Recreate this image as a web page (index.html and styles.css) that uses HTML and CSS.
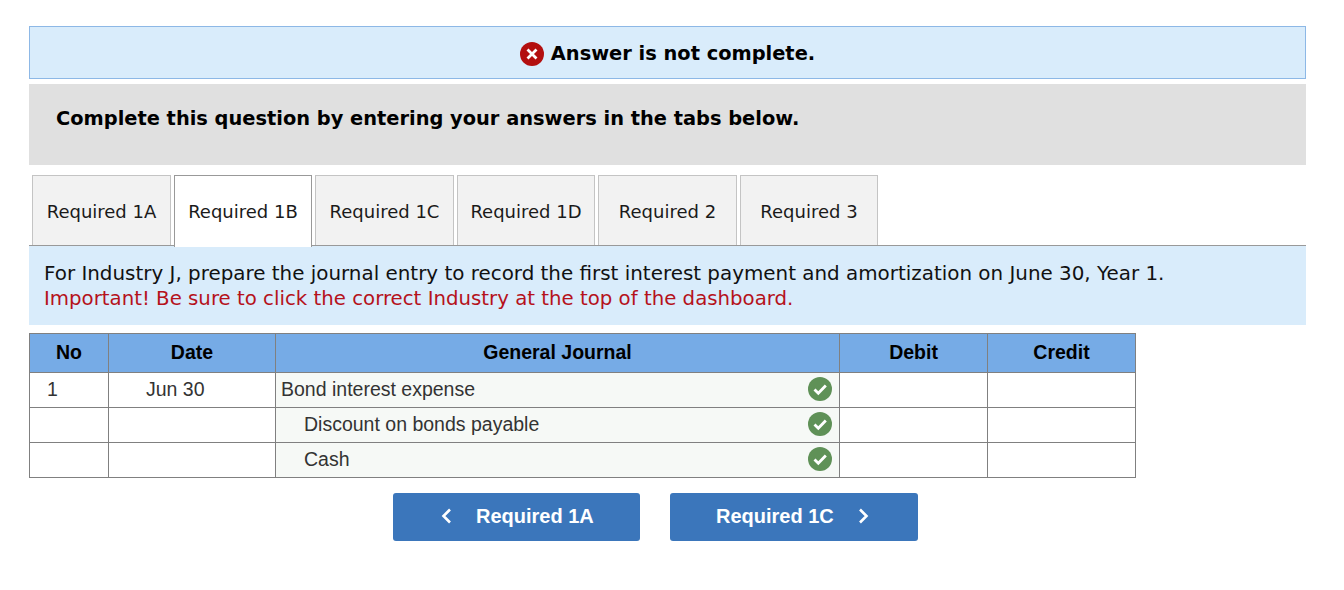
FILE: index.html
```html
<!DOCTYPE html>
<html lang="en">
<head>
<meta charset="utf-8">
<title>Answer is not complete</title>
<link rel="stylesheet" href="styles.css">
</head>
<body>
<main class="page">
  <div class="banner">
    <svg class="status-icon" viewBox="0 0 24 24" width="24" height="24" aria-hidden="true"><circle cx="12" cy="12" r="12" fill="#b30f0f"/><path d="M7.500 7.500l9 9M16.500 7.500l-9 9" stroke="#fff" stroke-width="2.800" fill="none"/></svg>
    <span>Answer is not complete.</span>
  </div>
  <div class="prompt">Complete this question by entering your answers in the tabs below.</div>
  <nav class="tabs">
    <div class="tab">Required 1A</div>
    <div class="tab active">Required 1B</div>
    <div class="tab">Required 1C</div>
    <div class="tab">Required 1D</div>
    <div class="tab">Required 2</div>
    <div class="tab">Required 3</div>
  </nav>
  <div class="info">
    <div>For Industry J, prepare the journal entry to record the first interest payment and amortization on June 30, Year 1.</div>
    <div class="warn">Important! Be sure to click the correct Industry at the top of the dashboard.</div>
  </div>
  <table class="journal">
    <colgroup><col class="c-no"><col class="c-date"><col class="c-gj"><col class="c-amt"><col class="c-amt"></colgroup>
    <thead>
      <tr><th>No</th><th>Date</th><th>General Journal</th><th>Debit</th><th>Credit</th></tr>
    </thead>
    <tbody>
      <tr>
        <td class="no">1</td><td class="date">Jun 30</td>
        <td class="acct"><div class="acct-in"><span>Bond interest expense</span><svg class="check" viewBox="0 0 24 24" width="24" height="24" aria-hidden="true"><circle cx="12" cy="12" r="12" fill="#5f9157"/><path d="M6.500 12.500l3.800 3.800 7.500-7.800" stroke="#fff" stroke-width="2.800" fill="none"/></svg></div></td>
        <td></td><td></td>
      </tr>
      <tr>
        <td></td><td></td>
        <td class="acct"><div class="acct-in indent"><span>Discount on bonds payable</span><svg class="check" viewBox="0 0 24 24" width="24" height="24" aria-hidden="true"><circle cx="12" cy="12" r="12" fill="#5f9157"/><path d="M6.500 12.500l3.800 3.800 7.500-7.800" stroke="#fff" stroke-width="2.800" fill="none"/></svg></div></td>
        <td></td><td></td>
      </tr>
      <tr>
        <td></td><td></td>
        <td class="acct"><div class="acct-in indent"><span>Cash</span><svg class="check" viewBox="0 0 24 24" width="24" height="24" aria-hidden="true"><circle cx="12" cy="12" r="12" fill="#5f9157"/><path d="M6.500 12.500l3.800 3.800 7.500-7.800" stroke="#fff" stroke-width="2.800" fill="none"/></svg></div></td>
        <td></td><td></td>
      </tr>
    </tbody>
  </table>
  <div class="pager">
    <div class="btn btn-prev">
      <svg class="chev" viewBox="0 0 12 16" width="12" height="16" aria-hidden="true"><path d="M10 1.500L3.500 8l6.500 6.500" stroke="#fff" stroke-width="2.600" fill="none"/></svg>
      <span>Required 1A</span>
    </div>
    <div class="btn btn-next">
      <span>Required 1C</span>
      <svg class="chev" viewBox="0 0 12 16" width="12" height="16" aria-hidden="true"><path d="M2 1.500L8.500 8 2 14.500" stroke="#fff" stroke-width="2.600" fill="none"/></svg>
    </div>
  </div>
</main>
</body>
</html>
```

FILE: styles.css
```css
* { box-sizing: border-box; }
html, body { margin: 0; padding: 0; background: #fff; }
body { height: 590px; overflow: hidden; color: #000; font-family: "DejaVu Sans", Verdana, sans-serif; }
.page { width: 1306px; padding: 26px 0 0 29px; }

.banner {
  height: 53px;
  padding-top: 2px;
  background: #d9ecfb;
  border: 1px solid #8db8e6;
  display: flex;
  align-items: center;
  justify-content: center;
  gap: 7px;
  font-size: 19.4px;
  font-weight: bold;
}
.status-icon { display: block; }

.prompt {
  margin-top: 5px;
  height: 81px;
  background: #e0e0e0;
  padding: 22px 27px 0;
  font-size: 19.4px;
  line-height: 26px;
  font-weight: bold;
}

.tabs {
  margin-top: 10px;
  height: 71px;
  padding-left: 3px;
  display: flex;
  gap: 3px;
  border-bottom: 1px solid #999;
}
.tab {
  width: 139px;
  height: 70px;
  padding-top: 2px;
  background: #f2f2f2;
  border: 1px solid #c4c4c4;
  border-bottom: 0;
  display: flex;
  align-items: center;
  justify-content: center;
  font-size: 18px;
  color: #1a1a1a;
}
.tab:nth-child(even) { width: 138px; }
.tab.active {
  height: 72px;
  padding-top: 0;
  background: #fff;
  border-color: #999;
  position: relative;
  z-index: 1;
}

.info {
  height: 79px;
  background: #d9ecfb;
  padding: 15px 15px 0;
  font-size: 19.9px;
  line-height: 25px;
  color: #111;
}
.warn { color: #b5121b; font-size: 19.76px; }

.journal {
  margin-top: 8px;
  width: 1107px;
  table-layout: fixed;
  border-collapse: collapse;
  font-family: "Liberation Sans", Arial, sans-serif;
  font-size: 19.5px;
}
.c-no { width: 79px; }
.c-date { width: 167px; }
.c-gj { width: 564px; }
.c-amt { width: 148px; }
.journal th, .journal td { border: 1px solid #808080; padding: 0; }
.journal th {
  height: 39px;
  padding-bottom: 2px;
  background: #76abe6;
  font-weight: bold;
  text-align: center;
}
.journal td { height: 35px; color: #333; }
.journal .no { padding-left: 17px; padding-bottom: 2px; }
.journal .date { padding-left: 37px; padding-bottom: 2px; }
.journal .acct { background: #f6f9f6; padding-bottom: 2px; }
.acct-in {
  display: flex;
  align-items: center;
  justify-content: space-between;
  padding: 0 7px 0 5px;
}
.acct-in.indent { padding-left: 28px; }
.check { display: block; }

.pager {
  margin-top: 15px;
  width: 1107px;
  display: flex;
  padding-left: 364px;
  gap: 30px;
}
.btn {
  height: 48px;
  padding-bottom: 2px;
  background: #3b76bb;
  border-radius: 3px;
  color: #fff;
  font-family: "Liberation Sans", Arial, sans-serif;
  font-size: 20px;
  font-weight: bold;
  display: flex;
  align-items: center;
  gap: 24px;
}
.btn-prev { width: 247px; padding-left: 47px; }
.btn-next { width: 248px; padding-left: 46px; }
.chev { display: block; }
```
